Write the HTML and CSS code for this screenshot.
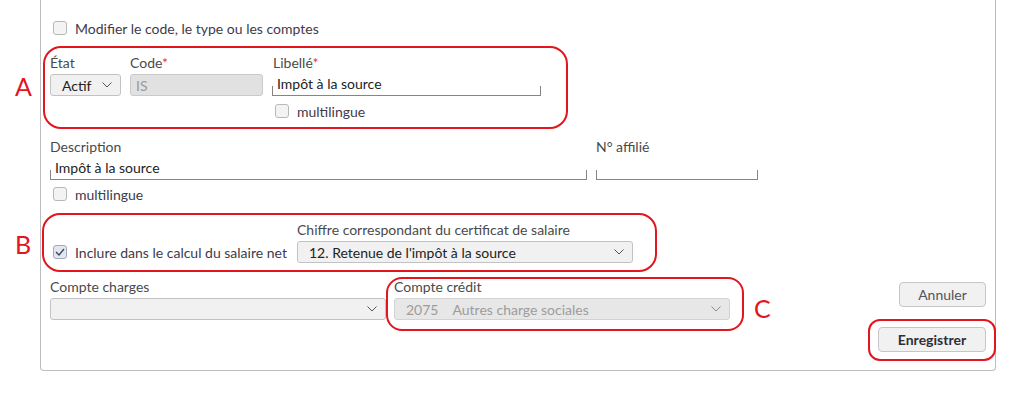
FILE: index.html
```html
<!DOCTYPE html>
<html lang="fr">

<head>
    <meta charset="UTF-8">
    <title>Type de compte</title>
    <link rel="stylesheet" href="styles.css">
</head>

<body>
    <div class="page">
        <div class="panel">
            <div class="check-row first"><span class="box"></span>Modifier le code, le type ou les comptes</div>

            <div class="row row-a">
                <div class="field w-etat">
                    <span class="lbl">État</span>
                    <div class="select">Actif
                        <svg class="chev" width="10" height="6" viewBox="0 0 10 6"><polyline points="0.5,0.5 5,5 9.5,0.5" /></svg>
                    </div>
                </div>
                <div class="field w-code">
                    <span class="lbl">Code<em>*</em></span>
                    <div class="input disabled">IS</div>
                </div>
                <div class="field w-libelle">
                    <span class="lbl">Libellé<em>*</em></span>
                    <div class="line-input">Impôt à la source</div>
                    <div class="check-row sub"><span class="box"></span>multilingue</div>
                </div>
            </div>

            <div class="row row-desc">
                <div class="field w-desc">
                    <span class="lbl">Description</span>
                    <div class="line-input">Impôt à la source</div>
                </div>
                <div class="field w-affilie">
                    <span class="lbl">N° affilié</span>
                    <div class="line-input"></div>
                </div>
            </div>
            <div class="check-row ml"><span class="box"></span>multilingue</div>

            <div class="row row-b">
                <div class="check-row net"><span class="box checked">
                        <svg width="10" height="8" viewBox="0 0 10 8"><polyline points="1,4 4,7 9,1" /></svg>
                    </span>Inclure dans le calcul du salaire net</div>
                <div class="field w-wide">
                    <span class="lbl">Chiffre correspondant du certificat de salaire</span>
                    <div class="select">12. Retenue de l'impôt à la source
                        <svg class="chev" width="10" height="6" viewBox="0 0 10 6"><polyline points="0.5,0.5 5,5 9.5,0.5" /></svg>
                    </div>
                </div>
            </div>

            <div class="row row-c">
                <div class="field w-wide">
                    <span class="lbl">Compte charges</span>
                    <div class="select">
                        <svg class="chev" width="10" height="6" viewBox="0 0 10 6"><polyline points="0.5,0.5 5,5 9.5,0.5" /></svg>
                    </div>
                </div>
                <div class="field w-wide">
                    <span class="lbl">Compte crédit</span>
                    <div class="select disabled"><span class="num">2075</span>Autres charge sociales
                        <svg class="chev" width="10" height="6" viewBox="0 0 10 6"><polyline points="0.5,0.5 5,5 9.5,0.5" /></svg>
                    </div>
                </div>
                <div class="actions">
                    <button class="btn cancel">Annuler</button>
                    <button class="btn save">Enregistrer</button>
                </div>
            </div>
        </div>

        <!-- annotations -->
        <div class="mark box-a"></div>
        <div class="mark box-b"></div>
        <div class="mark box-c"></div>
        <div class="mark box-save"></div>
        <span class="letter letter-a">A</span>
        <span class="letter letter-b">B</span>
        <span class="letter letter-c">C</span>
    </div>
</body>

</html>
```

FILE: styles.css
```css
body {
    margin: 0;
    font-family: Lato, "Open Sans", sans-serif;
    font-size: 14px;
    color: #3a3a3a;
    background-color: #fff;
}

.page {
    position: relative;
    width: 1036px;
    height: 400px;
}

.panel {
    box-sizing: border-box;
    margin-left: 40px;
    width: 956px;
    height: 371px;
    padding: 20px 9px 0;
    border: 1px solid #bdbdbd;
    border-top: none;
    border-radius: 0 0 4px 4px;
}

.row {
    display: flex;
    gap: 9px;
}

.field {
    display: flex;
    flex-direction: column;
}

.lbl {
    display: block;
    height: 18px;
    line-height: 18px;
    margin-bottom: 2px;
    color: #4a4a4a;
    white-space: nowrap;
}

.lbl em {
    font-style: normal;
    color: #d9365e;
}

/* checkboxes */
.check-row {
    display: flex;
    align-items: center;
    height: 16px;
    color: #3f3a4a;
    white-space: nowrap;
}

.box {
    box-sizing: border-box;
    display: flex;
    align-items: center;
    justify-content: center;
    width: 14px;
    height: 14px;
    margin: 0 8px 0 3px;
    border: 1px solid #b8b8b8;
    border-radius: 3px;
    background-color: #f3f3f3;
}

.box.checked {
    background-color: #e2e6f3;
    border-color: #a4a8b4;
}

.box svg polyline {
    fill: none;
    stroke: #3a3f55;
    stroke-width: 1.2;
}

.check-row.sub {
    margin-top: 7px;
}

.check-row.ml {
    margin-top: 6px;
}

.check-row.net {
    flex: 0 0 247px;
    height: 22px;
}

/* inputs */
.select,
.input {
    box-sizing: border-box;
    display: flex;
    align-items: center;
    height: 22px;
    padding: 0 8px 0 11px;
    border: 1px solid #c2c2c2;
    border-radius: 3px;
    background-color: #f1f1f1;
    color: #222;
    white-space: nowrap;
}

.select .chev {
    margin-left: auto;
    flex: none;
}

.chev polyline {
    fill: none;
    stroke: #555;
    stroke-width: 1;
}

.input.disabled {
    padding-left: 5px;
    background-color: #e1e1e1;
    border-color: #cacaca;
    color: #9a9a9a;
}

.select.disabled {
    background-color: #e7e7e7;
    border-color: #d2d2d2;
    color: #9c9c9c;
}

.select.disabled .num {
    margin-right: 14px;
}

.select.disabled .chev polyline {
    stroke: #8a8a8a;
}

.line-input {
    box-sizing: border-box;
    height: 22px;
    line-height: 20px;
    padding: 0 5px;
    border-bottom: 1px solid #858585;
    background:
        linear-gradient(#858585, #858585) left bottom / 1px 9px no-repeat,
        linear-gradient(#858585, #858585) right bottom / 1px 9px no-repeat;
    color: #222;
}

.w-etat {
    width: 71px;
}

.w-code {
    width: 133px;
}

.w-libelle {
    width: 269px;
}

.w-libelle .lbl {
    padding-left: 1px;
}

.w-desc {
    width: 537px;
}

.w-affilie {
    width: 162px;
}

.w-wide {
    width: 336px;
}

.row-a {
    margin-top: 18px;
}

.row-desc {
    margin-top: 19px;
}

.row-b {
    margin-top: 19px;
    gap: 0;
    align-items: flex-end;
}

.row-c {
    margin-top: 15px;
    gap: 8px;
}

/* buttons */
.actions {
    display: flex;
    flex-direction: column;
    align-items: flex-end;
    gap: 20px;
    margin-left: auto;
    padding-top: 4px;
}

.btn {
    box-sizing: border-box;
    height: 25px;
    padding: 0;
    border: 1px solid #c6c6c6;
    border-radius: 4px;
    background-color: #f1f1f1;
    font-family: inherit;
    font-size: 14px;
    cursor: pointer;
}

.btn.cancel {
    width: 87px;
    color: #555;
}

.btn.save {
    width: 108px;
    color: #2e2e38;
    font-weight: bold;
}

/* red annotations */
.mark {
    position: absolute;
    box-sizing: border-box;
    border: 2px solid #e3151d;
}

.box-a {
    left: 43px;
    top: 46px;
    width: 525px;
    height: 83px;
    border-radius: 18px;
}

.box-b {
    left: 42px;
    top: 213px;
    width: 615px;
    height: 59px;
    border-radius: 18px;
}

.box-c {
    left: 386px;
    top: 277px;
    width: 358px;
    height: 54px;
    border-radius: 16px;
}

.box-save {
    left: 868px;
    top: 319px;
    width: 128px;
    height: 42px;
    border-radius: 12px;
}

.letter {
    position: absolute;
    font-family: Lato, sans-serif;
    font-size: 25px;
    line-height: 25px;
    color: #e3151d;
}

.letter-a {
    left: 15px;
    top: 74px;
}

.letter-b {
    left: 15px;
    top: 232px;
}

.letter-c {
    left: 754px;
    top: 296px;
}
```
